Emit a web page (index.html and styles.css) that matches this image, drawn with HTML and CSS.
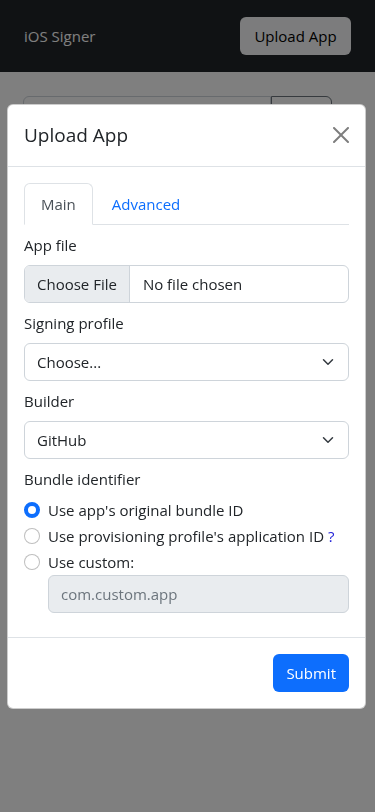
FILE: index.html
```html
<!DOCTYPE html>
<html lang="en">
<head>
<meta charset="utf-8">
<meta name="viewport" content="width=device-width, initial-scale=1">
<title>iOS Signer</title>
<link rel="stylesheet" href="styles.css">
</head>
<body>
<nav class="navbar">
  <span class="brand">iOS Signer</span>
  <button class="btn btn-light">Upload App</button>
</nav>
<main class="page">
  <div class="input-group">
    <div class="ig-input"></div>
    <div class="ig-btn"></div>
  </div>
</main>
<div class="backdrop"></div>
<div class="modal">
  <div class="modal-header">
    <h5 class="modal-title">Upload App</h5>
    <button class="btn-close" aria-label="Close">
      <svg viewBox="0 0 16 16" width="16" height="16"><path d="M.293.293a1 1 0 011.414 0L8 6.586 14.293.293a1 1 0 111.414 1.414L9.414 8l6.293 6.293a1 1 0 01-1.414 1.414L8 9.414l-6.293 6.293a1 1 0 01-1.414-1.414L6.586 8 .293 1.707a1 1 0 010-1.414z"/></svg>
    </button>
  </div>
  <div class="modal-body">
    <ul class="nav-tabs">
      <li class="tab active">Main</li>
      <li class="tab">Advanced</li>
    </ul>
    <div class="tab-pane">
      <div class="group">
        <label class="form-label">App file</label>
        <div class="file-input">
          <span class="file-btn">Choose File</span>
          <span class="file-name">No file chosen</span>
        </div>
      </div>
      <div class="group">
        <label class="form-label">Signing profile</label>
        <div class="select"><span>Choose...</span><svg class="chev" viewBox="0 0 16 16" width="16" height="12"><path d="m2 5 6 6 6-6" fill="none" stroke="#343a40" stroke-linecap="round" stroke-linejoin="round" stroke-width="2"/></svg></div>
      </div>
      <div class="group">
        <label class="form-label">Builder</label>
        <div class="select"><span>GitHub</span><svg class="chev" viewBox="0 0 16 16" width="16" height="12"><path d="m2 5 6 6 6-6" fill="none" stroke="#343a40" stroke-linecap="round" stroke-linejoin="round" stroke-width="2"/></svg></div>
      </div>
      <div class="group last">
        <label class="form-label">Bundle identifier</label>
        <div class="form-check"><span class="radio checked"></span><span>Use app's original bundle ID</span></div>
        <div class="form-check"><span class="radio"></span><span>Use provisioning profile's application ID <a class="help">?</a></span></div>
        <div class="form-check last-check"><span class="radio"></span><span>Use custom:</span></div>
        <div class="custom-input">com.custom.app</div>
      </div>
    </div>
  </div>
  <div class="modal-footer">
    <button class="btn btn-primary">Submit</button>
  </div>
</div>
</body>
</html>
```
FILE: styles.css
```css
* { box-sizing: border-box; }
html, body { margin: 0; padding: 0; }
body {
  font-family: "Open Sans", "Noto Sans", sans-serif;
  font-size: 15px;
  line-height: 24px;
  color: #212529;
  background: #fff;
  height: 812px;
  overflow: hidden;
}
.navbar {
  background: #212529;
  height: 72px;
  display: flex;
  align-items: center;
  justify-content: space-between;
  padding: 0 24px;
}
.brand { color: #fff; font-size: 15px; }
.btn {
  font-family: inherit;
  font-size: 15px;
  line-height: 24px;
  padding: 6px 12px;
  border: 1px solid transparent;
  border-radius: 6px;
  white-space: nowrap;
}
.btn-light { background: #f8f9fa; color: #000; height: 38px; width: 111px; }
.page { padding: 24px 43px 0 23px; }
.input-group { display: flex; height: 38px; }
.ig-input { flex: 1; border: 1px solid #ced4da; border-radius: 6px 0 0 6px; }
.ig-btn { width: 61px; border: 1px solid #6c757d; border-radius: 0 6px 6px 0; }
.backdrop {
  position: fixed; inset: 0;
  background: rgba(0,0,0,.5);
}
.modal {
  position: fixed;
  top: 104px; left: 7px;
  width: 359px;
  background: #fff;
  border: 1px solid rgba(0,0,0,.2);
  border-radius: 6px;
  display: flex; flex-direction: column;
}
.modal-header {
  display: flex; align-items: center; justify-content: space-between;
  padding: 15px 16px 16px;
  border-bottom: 1px solid #dee2e6;
}
.modal-title { margin: 0; font-size: 19px; font-weight: 500; line-height: 30px; }
.btn-close {
  background: none; border: 0; padding: 4px; width: 24px; height: 24px;
  opacity: .5; display: flex; align-items: center; justify-content: center;
  margin-right: -4px;
}
.btn-close svg { width: 16px; height: 16px; fill: #000; }
.modal-body { padding: 16px 16px 24px; }
.nav-tabs {
  list-style: none; margin: 0; padding: 0;
  display: flex;
  border-bottom: 1px solid #dee2e6;
}
.tab {
  padding: 8px 16px 8px 18px;
  color: #0d6efd;
  border: 1px solid transparent;
  border-radius: 6px 6px 0 0;
  margin-bottom: -1px;
}
.tab.active { color: #495057; border-color: #dee2e6 #dee2e6 #fff; background: #fff; padding: 8px 16px; }
.tab-pane { padding-top: 8px; }
.group { margin-bottom: 8px; }
.group.last { margin-bottom: 0; }
.form-label { display: block; margin-bottom: 8px; }
.group.last .form-label { margin-bottom: 7px; }
.file-input {
  display: flex; height: 38px;
  border: 1px solid #ced4da; border-radius: 6px; overflow: hidden;
}
.file-btn {
  background: #e9ecef; padding: 6px 12px;
  border-right: 1px solid #ced4da;
}
.file-name { padding: 6px 12px 6px 13px; }
.select {
  display: flex; align-items: center; justify-content: space-between;
  height: 38px; padding: 0 12px;
  border: 1px solid #ced4da; border-radius: 6px;
}
.form-check { display: flex; align-items: center; gap: 8px; min-height: 24px; margin-bottom: 2px; }
.form-check.last-check { margin-bottom: 1px; }
.radio {
  width: 16px; height: 16px; border-radius: 50%;
  border: 1px solid rgba(0,0,0,.25); background: #fff; flex: none;
}
.radio.checked { border: 4.5px solid #0d6efd; background: #fff; }
.help { color: #2323d8; text-decoration: none; }
.custom-input {
  margin-left: 24px; height: 38px;
  padding: 6px 12px;
  background: #e9ecef; color: #6c757d;
  border: 1px solid #ced4da; border-radius: 6px;
}
.modal-footer {
  display: flex; justify-content: flex-end;
  padding: 16px;
  border-top: 1px solid #dee2e6;
}
.btn-primary { background: #0d6efd; color: #fff; height: 38px; }
```
